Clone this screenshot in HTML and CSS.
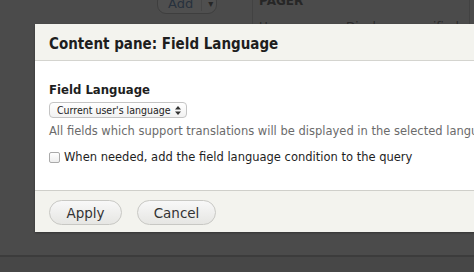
FILE: index.html
```html
<!DOCTYPE html>
<html>
<head>
<meta charset="utf-8">
<link rel="stylesheet" href="styles.css">
</head>
<body>
<div class="page">
  <div class="behind">
    <div class="left-col">
      <div class="add-btn"><span class="add-label">Add</span><span class="add-sep"></span><span class="add-arrow">&#9662;</span></div>
    </div>
    <div class="right-col">
      <div class="pager-title">PAGER</div>
      <div class="pager-row"><span>Use pager:</span><span>Display a specified</span><span>(Select...)</span></div>
    </div>
  </div>
  <div class="dialog">
    <div class="dialog-header">Content pane: Field Language</div>
    <div class="dialog-body">
      <div class="field-label">Field Language</div>
      <div class="select"><span>Current user's language</span><svg class="updown" width="6" height="9" viewBox="0 0 6 9"><path d="M0 3.5 L3 0 L6 3.5 Z M0 5.5 L3 9 L6 5.5 Z" fill="#333"/></svg></div>
      <div class="desc">All fields which support translations will be displayed in the selected language.</div>
      <label class="check-row"><span class="checkbox"></span><span>When needed, add the field language condition to the query</span></label>
    </div>
    <div class="dialog-footer">
      <button class="btn btn-apply">Apply</button>
      <button class="btn btn-cancel">Cancel</button>
    </div>
  </div>
  <div class="bottom-band"></div>
</div>
</body>
</html>
```
FILE: styles.css
```css
html, body {
  margin: 0;
  padding: 0;
}
body {
  width: 474px;
  height: 272px;
  overflow: hidden;
  background: #4b4b4b;
  font-family: "DejaVu Sans", Verdana, sans-serif;
}
.page {
  display: flex;
  flex-direction: column;
  width: 474px;
  height: 272px;
}
.behind {
  height: 24px;
  flex: none;
  display: flex;
  overflow: hidden;
}
.left-col {
  flex: none;
  width: 252px;
  border-right: 1px solid #424242;
  position: relative;
}
.add-btn {
  position: absolute;
  left: 157px;
  top: -8px;
  width: 60px;
  height: 22px;
  border: 1px solid #3e3e3e;
  border-radius: 9px;
  background: #4f4f4f;
  display: flex;
  align-items: flex-end;
  box-sizing: border-box;
  padding: 0 0 2px 10px;
}
.add-label {
  font-size: 13px;
  color: #27313d;
  line-height: 14px;
  white-space: nowrap;
}
.add-sep {
  width: 1px;
  height: 14px;
  background: #464646;
  margin-left: 8px;
}
.add-arrow {
  font-size: 10px;
  color: #262626;
  margin-left: 6px;
  line-height: 14px;
}
.right-col {
  flex: 1;
  min-width: 0;
  padding-left: 6px;
  border-right: 1px solid #424242;
  margin-right: 4px;
  overflow: hidden;
}
.pager-title {
  margin-top: -5px;
  font-size: 12px;
  font-weight: bold;
  color: #262626;
  line-height: 12px;
  white-space: nowrap;
}
.pager-row {
  margin-top: 14px;
  display: flex;
  gap: 22px;
  font-size: 12px;
  line-height: 12px;
  color: #2c2c2c;
  white-space: nowrap;
}
.dialog {
  flex: none;
  margin-left: 35px;
  width: 460px;
  height: 208px;
  display: flex;
  flex-direction: column;
  background: #fff;
  box-shadow: 0 1px 2px rgba(0,0,0,0.3);
}
.dialog-header {
  height: 37px;
  flex: none;
  box-sizing: border-box;
  background: #f3f3ee;
  border-bottom: 1px solid #d4d4cf;
  padding: 11px 0 0 14px;
  font-size: 15px;
  font-weight: bold;
  font-stretch: condensed;
  font-family: "DejaVu Sans Condensed", "DejaVu Sans", sans-serif;
  color: #1e1e1e;
  line-height: 18px;
  white-space: nowrap;
}
.dialog-body {
  height: 129px;
  flex: none;
  box-sizing: border-box;
  padding: 21px 0 0 14px;
  white-space: nowrap;
}
.field-label {
  font-size: 13px;
  font-weight: bold;
  font-stretch: condensed;
  font-family: "DejaVu Sans Condensed", "DejaVu Sans", sans-serif;
  color: #1e1e1e;
  line-height: 16px;
}
.select {
  margin-top: 4px;
  width: 138px;
  height: 16px;
  box-sizing: border-box;
  border: 1px solid #c4c4c4;
  border-radius: 4px;
  background: linear-gradient(#fff, #f2f2f2);
  display: flex;
  align-items: center;
  padding: 0 5px 0 7px;
  font-size: 10.5px;
  font-stretch: condensed;
  font-family: "DejaVu Sans Condensed", "DejaVu Sans", sans-serif;
  color: #222;
  justify-content: space-between;
}
.desc {
  margin-top: 6px;
  font-size: 11.5px;
  color: #6b6b6b;
  line-height: 14px;
}
.check-row {
  margin-top: 12px;
  display: flex;
  align-items: center;
  gap: 4px;
  font-size: 11.5px;
  color: #1e1e1e;
  line-height: 14px;
}
.checkbox {
  width: 11px;
  height: 11px;
  box-sizing: border-box;
  border: 1px solid #aaa;
  border-radius: 2px;
  background: linear-gradient(#fff, #eee);
}
.dialog-footer {
  flex: 1;
  background: #f3f3ee;
  border-top: 1px solid #cfcfca;
  display: flex;
  align-items: flex-start;
  gap: 15px;
  padding: 9px 0 0 14px;
}
.btn {
  height: 25px;
  border: 1px solid #c8c8c4;
  border-radius: 13px;
  background: linear-gradient(#f8f8f8, #e6e6e3);
  font-family: "DejaVu Sans", Verdana, sans-serif;
  font-size: 13.5px;
  color: #333;
  padding: 0;
  box-sizing: border-box;
}
.btn-apply { width: 73px; }
.btn-cancel { width: 79px; }
.bottom-band {
  margin-top: 23px;
  flex: 1;
  border-top: 2px solid #3c3c3c;
  background: #474747;
}
```
